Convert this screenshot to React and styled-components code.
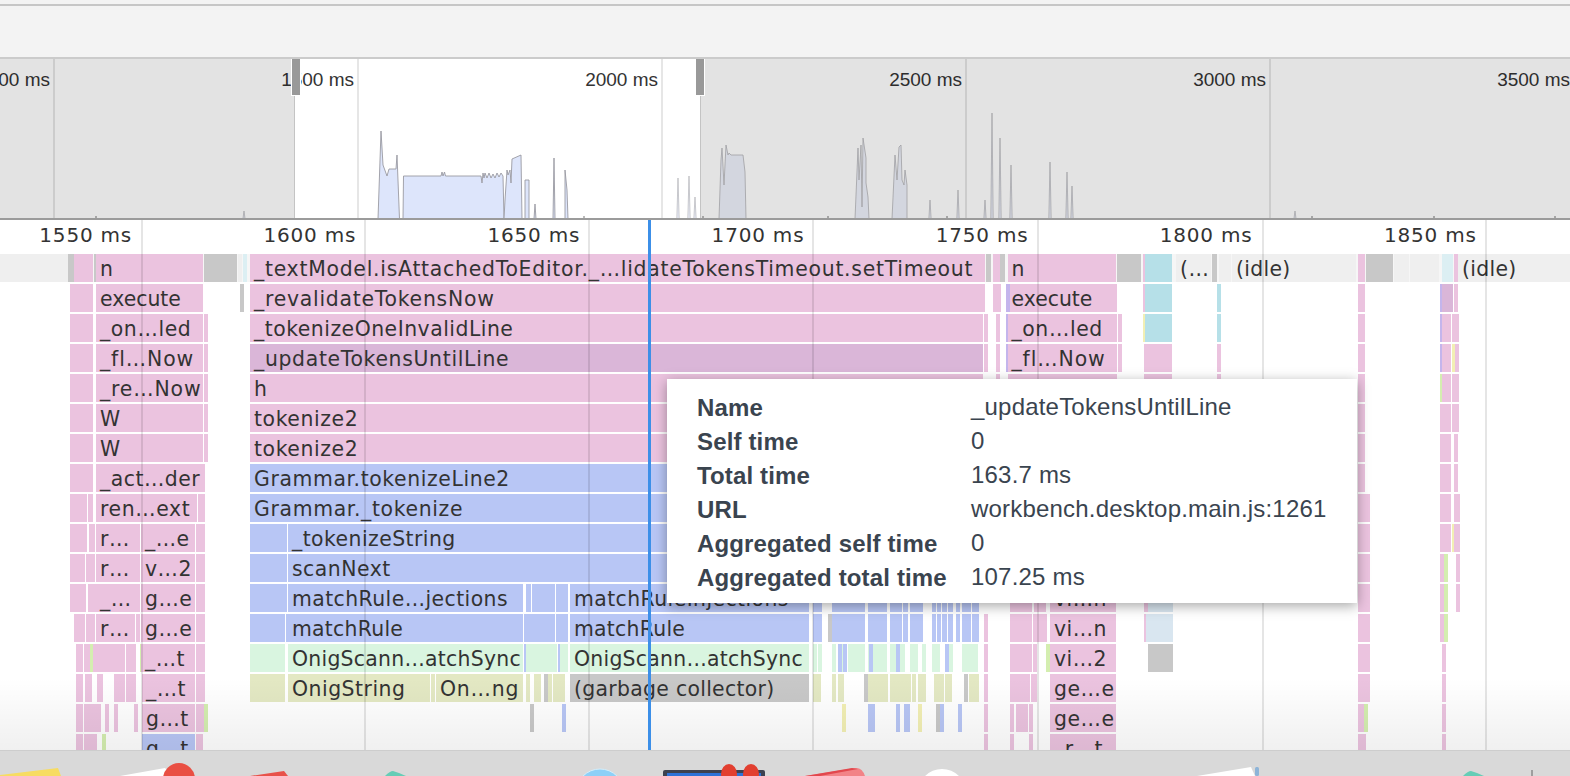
import React from 'react';
import styled, { createGlobalStyle } from 'styled-components';

const GlobalStyle = createGlobalStyle`
  html, body {
    margin: 0;
    padding: 0;
    overflow: hidden;
    background: #fff;
  }
`;

const palette = {
  pink: '#ebc3df',
  hover: '#dab6d8',
  blue: '#b8c6f5',
  green: '#d9f5e0',
  olive: '#e3e8c3',
  gray: '#c8c8c8',
  cyan: '#b6e0e8',
  pale: '#dceff3',
  mist: '#d9e6f0',
  idle: '#efefef',
  lilac: '#c4b5ec',
  lime: '#d4eeb0',
  yellow: '#f2efb4',
};

const Page = styled.div`
  width: 1570px;
  height: 776px;
  display: flex;
  flex-direction: column;
  overflow: hidden;
  font-family: "DejaVu Sans", sans-serif;
`;

const Toolbar = styled.div`
  height: 55px;
  margin-top: 4px;
  flex: none;
  box-sizing: border-box;
  background: #f3f3f3;
  border-top: 2px solid #c6c6c6;
  border-bottom: 2px solid #cbcbcb;
  box-shadow: 0 -4px 0 #f3f3f3;
`;

const Overview = styled.div`
  position: relative;
  height: 161px;
  flex: none;
  box-sizing: border-box;
  background: #fff;
  border-bottom: 2px solid #9b9b9b;
  overflow: hidden;
`;

const OverviewGrid = styled.div`
  position: absolute;
  inset: 0;
  left: -249px;
  display: flex;
`;

const OverviewCell = styled.div`
  width: 304px;
  height: 100%;
  flex: none;
  box-sizing: border-box;
  border-right: 2px solid #e6e6e6;
  padding: 10px 3px 0 0;
  text-align: right;
  font-family: "Liberation Sans", Arial, sans-serif;
  font-size: 19px;
  line-height: 22px;
  color: #333;
`;

const Chart = styled.svg`
  position: absolute;
  left: 0;
  top: 1px;
`;

const Dim = styled.div`
  position: absolute;
  top: 0;
  bottom: 0;
  background: rgba(0, 0, 0, 0.11);
  left: ${p => p.$left}px;
  width: ${p => p.$width}px;
  ${p => (p.$edge === 'right' ? 'border-right: 1px solid #c4c4c4;' : 'border-left: 1px solid #c4c4c4;')}
  box-sizing: border-box;
`;

const Handle = styled.div`
  position: absolute;
  top: 0;
  left: ${p => p.$left}px;
  width: 10px;
  height: 37px;
  box-sizing: border-box;
  background: #999;
  border: 1.5px solid #fff;
  border-top: none;
`;

const Timeline = styled.div`
  position: relative;
  flex: 1;
  min-height: 0;
  display: flex;
  flex-direction: column;
  overflow: hidden;
  background: #fff;
`;

const Ruler = styled.div`
  height: 34px;
  flex: none;
  display: flex;
  margin-left: -83px;
`;

const RulerCell = styled.div`
  width: 224.1px;
  flex: none;
  box-sizing: border-box;
  padding: 2px 9px 0 0;
  text-align: right;
  font-size: 20px;
  line-height: 26px;
  letter-spacing: 0.8px;
  color: #333;
`;

const Flame = styled.div`
  flex: 1;
  min-height: 0;
  display: flex;
  flex-direction: column;
  gap: 2px;
`;

const Row = styled.div`
  position: relative;
  height: 28px;
  flex: none;
  background: ${p => (p.$task ? '#f6f6f6' : 'transparent')};
`;

const Bar = styled.div.attrs(p => ({
  style: { left: p.$x, width: p.$w, letterSpacing: p.$ls },
}))`
  position: absolute;
  top: 0;
  height: 28px;
  box-sizing: border-box;
  padding-left: 4px;
  background: ${p => palette[p.$c]};
  color: #333;
  font-size: 20.4px;
  line-height: 30px;
  letter-spacing: 0.5px;
  white-space: nowrap;
  overflow: hidden;
`;

const GridLine = styled.div`
  position: absolute;
  top: 0;
  bottom: 0;
  left: ${p => p.$left}px;
  width: 2px;
  background: rgba(0, 0, 0, 0.1);
`;

const Fade = styled.div`
  position: absolute;
  left: 0;
  right: 0;
  bottom: 0;
  height: 72px;
  background: linear-gradient(rgba(0, 0, 0, 0), rgba(0, 0, 0, 0.06));
`;

const Cursor = styled.div`
  position: absolute;
  top: 0;
  bottom: 0;
  left: 648px;
  width: 3px;
  background: #3c8fe8;
`;

const Tooltip = styled.div`
  position: absolute;
  left: 667px;
  top: 159px;
  width: 690px;
  height: 224px;
  box-sizing: border-box;
  padding: 11px 0 0 30px;
  background: #fff;
  box-shadow: 0 3px 12px rgba(0, 0, 0, 0.35);
  display: grid;
  grid-template-columns: 274px 1fr;
  grid-auto-rows: 34px;
  font-family: "Liberation Sans", Arial, sans-serif;
  font-size: 24px;
  line-height: 34px;
  color: #3a444f;
`;

const TipName = styled.div`
  font-weight: 700;
  margin-top: 1px;
  letter-spacing: 0.15px;
`;

const TipValue = styled.div`
  letter-spacing: 0.2px;
`;

const Dock = styled.div`
  height: 26px;
  flex: none;
  box-sizing: border-box;
  background: #d9d9d9;
  border-top: 1px solid #cdcdcd;
  overflow: hidden;
`;

const DockIcons = styled.svg`
  display: block;
`;

// one entry per bar: colour, start x, end x, label, letter spacing where the label runs wider or tighter
const B = (c, x, e, t, ls) => ({ c, x, w: e - x, t, ls });
const slivers = (c, ...xs) => xs.map(x => B(c, x, x + 1.2));
const spans = (c, ...pairs) => pairs.map(([x, e]) => B(c, x, e));

const farStripes = slivers('pink', 1358, 1360.5, 1363, 1365.5);
const nearRight = [B('pink', 1441.5, 1451), ...slivers('pink', 1440, 1454, 1456)];

const blueRun = [[813, 814], [815, 817], [818, 821], [832, 834], [835, 837], [838, 840], [841, 843], [845, 847], [848, 865], [868, 869], [871, 872], [873, 887], [890, 893], [894, 897], [898, 902], [903, 908], [910, 923], [932, 935], [937, 941], [942, 947], [948, 953], [956, 960], [962, 971], [972, 979]];
const greenRun = [[813, 817], [818, 821], [832, 835], [839, 843], [848, 865], [868, 869], [873, 887], [890, 896], [898, 905], [910, 918], [922, 923], [932, 940], [945, 953], [962, 978]];
const oliveRun = [[813, 814], [815, 816], [817, 818], [832, 833], [838, 839], [840, 842], [868, 869], [870, 871], [872, 873], [874, 875], [876, 877], [878, 879], [880, 883], [884, 887], [890, 891], [892, 893], [894, 895], [896, 897], [899, 900], [901, 902], [903, 904], [905, 906], [907, 908], [912, 915], [918, 919], [920, 921], [922, 923], [934, 936], [937, 939], [940, 942], [945, 947], [948, 950], [969, 970], [971, 972], [973, 974], [975, 978]];

const leftPink = [B('pink', 70, 71), B('pink', 74, 93)];

const rows = [
  [
    B('idle', 0, 68), B('gray', 68, 70), B('gray', 71, 73), B('pink', 74, 93), B('gray', 94, 95),
    B('pink', 96, 203, 'n'), B('gray', 204, 237), B('idle', 238, 240), B('pale', 243, 245),
    B('pink', 250, 985, '_textModel.isAttachedToEditor._…lidateTokensTimeout.setTimeout', '0.74px'),
    B('gray', 986, 991), B('pink', 993, 995), B('pink', 996, 999), B('gray', 1000, 1005),
    B('pink', 1007.5, 1116, 'n'), B('gray', 1117, 1141), B('pink', 1143, 1145), B('cyan', 1145, 1172),
    B('idle', 1176, 1211, '(…'), B('gray', 1212, 1217), B('idle', 1219, 1231), B('idle', 1232, 1356, '(idle)', '0.3px'),
    B('pink', 1358, 1365), B('gray', 1366, 1393), B('idle', 1394, 1409), B('idle', 1410, 1439),
    B('pale', 1441.5, 1453), B('pink', 1454, 1455.5), B('idle', 1458, 1570, '(idle)', '0.3px'),
  ],
  [
    ...leftPink, B('pink', 96, 203, 'execute', '0'), B('gray', 240, 243),
    B('pink', 250, 985, '_revalidateTokensNow', '0.75px'), ...slivers('pink', 993, 997),
    B('pink', 1007.5, 1117, 'execute', '0'), B('lilac', 1006, 1007), B('pink', 1143, 1145), B('cyan', 1145, 1172), B('cyan', 1217, 1218.5),
    B('pink', 1358, 1365), B('lilac', 1440, 1441), B('hover', 1442, 1453), B('pink', 1454, 1455.5),
  ],
  [
    ...leftPink, B('pink', 96, 203, '_on…led', '0.6px'), B('pink', 204, 205.5),
    B('pink', 250, 983, '_tokenizeOneInvalidLine'), B('pink', 984, 985), B('pink', 996, 998),
    B('lilac', 1006, 1007), B('pink', 1007.5, 1117, '_on…led', '0.6px'), B('pink', 1118, 1119), B('yellow', 1143, 1144), B('cyan', 1145, 1172), B('cyan', 1217, 1218.5),
    B('pink', 1358, 1365), B('lilac', 1440, 1441), B('pink', 1442, 1451), ...slivers('pink', 1452, 1454.5),
  ],
  [
    ...leftPink, B('pink', 96, 203, '_fl…Now', '0.9px'), B('pink', 204, 205.5),
    B('hover', 250, 983, '_updateTokensUntilLine', '0.68px'), B('pink', 984, 985), B('pink', 996, 998),
    B('lilac', 1006, 1007), B('pink', 1007.5, 1117, '_fl…Now', '0.9px'), B('pink', 1118, 1119), B('pink', 1144, 1172), B('pink', 1217, 1218.5),
    B('pink', 1358, 1365), B('lilac', 1440, 1441), B('pink', 1442, 1451), B('yellow', 1452, 1453.5), B('pink', 1454.5, 1456),
  ],
  [
    ...leftPink, B('pink', 96, 203, '_re…Now', '0.85px'), B('pink', 204, 205.5),
    B('pink', 250, 983, 'h'), B('pink', 996, 998), B('pink', 1007.5, 1117), B('pink', 1144, 1172), B('pink', 1217, 1218.5),
    B('pink', 1358, 1365), B('lime', 1440, 1441), B('pink', 1442, 1451), ...slivers('pink', 1452, 1454.5),
  ],
  [
    ...leftPink, B('pink', 96, 203, 'W'), B('pink', 204, 205.5),
    B('pink', 250, 985, 'tokenize2', '0.6px'), B('pink', 1358, 1365), B('pink', 1442, 1451), ...slivers('pink', 1440, 1452, 1454.5),
  ],
  [
    ...leftPink, B('pink', 96, 203, 'W'), B('pink', 204, 205.5),
    B('pink', 250, 985, 'tokenize2', '0.6px'), B('pink', 1358, 1365), B('pink', 1442, 1451), ...slivers('pink', 1440, 1454),
  ],
  [
    ...leftPink, B('pink', 96, 205, '_act…der'),
    B('blue', 250, 985, 'Grammar.tokenizeLine2', '0.6px'), B('pink', 1358, 1365), B('pink', 1442, 1451), ...slivers('pink', 1440, 1454),
  ],
  [
    B('pink', 70, 71), B('pink', 74, 87), B('pink', 88, 93), B('pink', 96, 197, 'ren…ext', '0.6px'), ...slivers('pink', 198, 201),
    B('blue', 250, 985, 'Grammar._tokenize', '0.65px'), ...farStripes, ...nearRight,
  ],
  [
    ...slivers('pink', 70, 89, 91), B('pink', 74, 87), B('pink', 96, 140, 'r…'), B('pink', 141, 195, '_…e'), ...slivers('pink', 196, 198.5, 201),
    B('blue', 250, 287), B('blue', 288, 985, '_tokenizeString', '0.45px'), ...farStripes, B('pink', 1441.5, 1451), B('yellow', 1452, 1453.5), ...slivers('pink', 1440, 1454, 1456),
  ],
  [
    ...slivers('pink', 70, 86, 89, 91), B('pink', 74, 85), B('pink', 96, 140, 'r…'), B('pink', 141, 195, 'v…2'), ...slivers('pink', 196, 198.5, 201),
    B('blue', 250, 287), B('blue', 288, 985, 'scanNext'), ...farStripes, ...slivers('pink', 1440, 1456), B('lime', 1444, 1445.5),
  ],
  [
    ...slivers('pink', 70, 87.5, 90, 92), B('pink', 74, 86), B('pink', 96, 140, '_…'), B('pink', 141, 195, 'g…e'), ...slivers('pink', 196, 198.5, 201),
    B('blue', 250, 287), B('blue', 288, 523, 'matchRule…jections', '0.42px'), ...spans('blue', [526, 531], [532, 555], [556, 557], [558, 559], [560, 562], [563.5, 566.5]),
    B('blue', 570, 809, 'matchRuleInjections', '0.42px'), ...spans('blue', ...blueRun), B('pink', 1010, 1032), B('pink', 1034, 1046), B('pink', 1050, 1116, 'vi…n'), B('mist', 1146, 1173), ...slivers('pink', 1144), ...farStripes, ...slivers('pink', 1440, 1456), B('lime', 1444, 1445.5),
  ],
  [
    B('pink', 74, 75), B('pink', 76, 85), ...slivers('pink', 86, 88, 90.5), B('pink', 91, 93), B('pink', 96, 135, 'r…'), B('pink', 136, 140), B('pink', 141, 195, 'g…e'), ...slivers('pink', 196, 198.5, 201),
    B('blue', 250, 285), B('blue', 286, 287), B('blue', 288, 523, 'matchRule', '0.25px'), ...spans('blue', [524, 525], [526, 527], [528, 529], [530, 531], [532, 555], [556, 557], [558, 559], [560, 562], [563.5, 566.5]),
    B('blue', 570, 809, 'matchRule', '0.25px'), ...spans('blue', ...blueRun), B('gray', 828, 831), B('pink', 984, 985.5),
    B('pink', 1010, 1032), B('pink', 1033, 1034), B('pink', 1034.5, 1047), B('pink', 1050, 1116, 'vi…n'), B('pink', 1144, 1145), B('mist', 1146, 1173), ...farStripes, B('pink', 1440, 1441.5), B('lime', 1444, 1445.5),
  ],
  [
    B('pink', 76, 83), ...slivers('pink', 84, 87), B('lime', 90, 91), B('pink', 92.5, 94), B('pink', 97, 125), B('pink', 126, 136), B('lime', 140, 141), B('pink', 141, 195, '_…t'), ...slivers('pink', 196, 198.5, 201),
    B('green', 250, 285), B('green', 288, 523, 'OnigScann…atchSync', '0.26px'), B('blue', 524, 525), ...spans('green', [526, 527], [528, 529], [530, 533]), B('green', 533, 557), B('blue', 557.5, 559), B('green', 560, 568),
    B('green', 570, 809, 'OnigScann…atchSync', '0.26px'), ...spans('green', ...greenRun), ...slivers('blue', 838, 843, 869, 896, 945), B('pink', 984, 985.5),
    B('pink', 1010, 1032), B('pink', 1033, 1034), B('lime', 1046, 1047), B('pink', 1050, 1116, 'vi…2'), B('gray', 1148, 1173), ...farStripes, B('pink', 1442, 1443.5),
  ],
  [
    B('pink', 76, 83), B('pink', 85, 86), B('pink', 88, 91.5), B('pink', 97, 103), B('pink', 114, 125), B('pink', 126, 136), B('pink', 142, 195, '_…t'), ...slivers('pink', 196, 198.5, 201),
    B('olive', 250, 285), B('olive', 288, 430, 'OnigString'), B('olive', 431, 433), B('olive', 436, 523, 'On…ng', '0.8px'), ...spans('olive', [526, 530], [534, 541], [546, 552], [553, 555], [556, 557], [558, 560], [561, 563]), B('gray', 544, 545.5),
    B('gray', 570, 809, '(garbage collector)', '0.3px'), ...spans('olive', ...oliveRun), B('gray', 864, 865), B('gray', 964, 967), B('pink', 984, 985.5),
    B('pink', 1010, 1030), B('pink', 1031, 1032), B('pink', 1032.5, 1034), B('pink', 1050, 1116, 'ge…e'), ...farStripes, B('pink', 1442, 1443.5),
  ],
  [
    B('pink', 76, 83), ...slivers('pink', 84, 87, 90.5), B('pink', 95, 101), ...slivers('pink', 104.5, 114, 134), B('pink', 142, 195, 'g…t'), ...slivers('pink', 196, 198.5, 200.5), B('lime', 204, 205),
    B('gray', 530, 531), B('blue', 562, 563), B('yellow', 842, 843), ...slivers('blue', 868, 870.5, 896, 904, 906, 958), B('yellow', 918, 919), B('gray', 936, 939.5), B('blue', 940, 941), B('pink', 984, 985.5),
    B('pink', 1010, 1011), B('pink', 1016, 1028), B('pink', 1029, 1030.5), B('pink', 1050, 1116, 'ge…e'), ...slivers('pink', 1358, 1361), B('lime', 1364, 1365.5), B('pink', 1442, 1443.5),
  ],
  [
    B('pink', 76, 83), ...slivers('pink', 84, 87, 90, 93), B('lime', 102, 104), B('blue', 142, 195, 'g…t'), ...slivers('pink', 196, 198.5),
    ...slivers('pink', 984, 1010, 1029), B('pink', 1050, 1116, '_r…t'), ...slivers('pink', 1358, 1362, 1442),
  ],
];

const overviewLabels = ['1000 ms', '1500 ms', '2000 ms', '2500 ms', '3000 ms', '3500 ms'];
const rulerLabels = ['1550 ms', '1600 ms', '1650 ms', '1700 ms', '1750 ms', '1800 ms', '1850 ms'];
const gridLines = [141, 364, 588, 812, 1037, 1262, 1485];

const tip = [
  ['Name', '_updateTokensUntilLine'],
  ['Self time', '0'],
  ['Total time', '163.7 ms'],
  ['URL', 'workbench.desktop.main.js:1261'],
  ['Aggregated self time', '0'],
  ['Aggregated total time', '107.25 ms'],
];

const selectedAreas = [
  '378,159 381,71 383,105 387,116 389,109 396,109 397,95 399.5,159',
  '403,159 403.5,116 441,116 442,112 443,116 444.5,112 445.5,116 481,116 482,123 483,113 484,118 485,113 487,118 489,113 491,118 493,114 495,118 497,113 499,117 501,113 503,116 504,159',
  '504,159 505,140 507,110 508,115 510,110 511,123 512,99 521,95 522,159',
  '525,159 525,120 529,120 529,159',
  '534,159 535,144 536,159',
  '553,159 554,98 555,159',
  '565,159 565,110 567,130 568,159',
];

const dimmedAreas = [
  '719,159 721,100 722,88 724,125 726,85 728,95 729,93 731,95 743,95 745,112 746,159',
  '855,159 858,88 859,120 861,85 862,147 863,78 866,98 866,123 868,137 869,159',
  '892,159 895,95 897,120 899,87 901,85 902,120 904,125 905,110 907,125 907,159',
];

const spikes = [[244, 151], [678, 118], [689, 116], [695, 137], [930, 140], [958, 130], [985, 140], [992, 53], [1000, 78], [1011, 105], [1050, 102], [1067, 112], [1072, 126], [1295, 151]];
const baseTicks = [96, 584, 703, 828, 947, 1312, 1434, 1555];

const OverviewChart = () => (
  <Chart width="1570" height="160" viewBox="0 0 1570 160">
    {selectedAreas.map(points => (
      <polygon key={points} points={points} fill="#dde5fb" stroke="#9a9aa2" strokeWidth="0.9" />
    ))}
    {dimmedAreas.map(points => (
      <polygon key={points} points={points} fill="#eef1fb" stroke="#b4b4b8" strokeWidth="0.8" />
    ))}
    {spikes.map(([x, y]) => (
      <polygon key={x} points={`${x - 1.2},160 ${x},${y} ${x + 1.2},160`} fill="#eef1fb" stroke="#a8a8ac" strokeWidth="0.6" />
    ))}
    {baseTicks.map(x => (
      <line key={x} x1={x} x2={x} y1="156" y2="159" stroke="#777" strokeWidth="1" />
    ))}
  </Chart>
);

const DockArt = () => (
  <DockIcons width="1570" height="25" viewBox="0 0 1570 25">
    <polygon points="0,25 0,24 58,17 61,25" fill="#f7dc62" />
    <polygon points="120,25 165,17 172,25" fill="#fff" />
    <circle cx="179" cy="28" r="16" fill="#e94f43" />
    <polygon points="250,25 284,20 288,25" fill="#e8524a" />
    <path d="M385 25 Q390 20 393 20 Q400 22 406 25 Z" fill="#66cdb6" />
    <circle cx="600" cy="42" r="24" fill="#8ed0f7" stroke="#d4eefb" strokeWidth="1" />
    <rect x="663" y="19" width="102" height="12" rx="2" fill="#3d4250" />
    <rect x="667" y="22" width="94" height="8" fill="#2d72d8" />
    <ellipse cx="729" cy="23" rx="8" ry="10" fill="#e23f30" />
    <ellipse cx="751" cy="23" rx="8" ry="10" fill="#e23f30" />
    <path d="M805 25 L855 17 Q862 16 865 25 Z" fill="#f28387" />
    <path d="M805 25 L852 17 L858 18 L820 25 Z" fill="#e2484e" />
    <circle cx="942" cy="42" r="24" fill="#fff" />
    <polygon points="1197,25 1251,16 1255,25" fill="#fff" />
    <rect x="1255" y="16" width="4" height="9" rx="1.5" fill="#8db4d8" />
    <path d="M1463 25 Q1468 20 1471 20 Q1478 22 1484 25 Z" fill="#66cdb6" />
    <line x1="1532" x2="1532" y1="19" y2="25" stroke="#8a8a8a" strokeWidth="1.5" />
  </DockIcons>
);

export default function App() {
  return (
    <Page>
      <GlobalStyle />
      <Toolbar />
      <Overview>
        <OverviewGrid>
          {overviewLabels.map(label => (
            <OverviewCell key={label}>{label}</OverviewCell>
          ))}
        </OverviewGrid>
        <OverviewChart />
        <Dim $left={0} $width={295} $edge="right" />
        <Dim $left={700} $width={870} $edge="left" />
        <Handle $left={291} />
        <Handle $left={695} />
      </Overview>
      <Timeline>
        <Ruler>
          {rulerLabels.map(label => (
            <RulerCell key={label}>{label}</RulerCell>
          ))}
        </Ruler>
        <Flame>
          {rows.map((bars, i) => (
            <Row key={i} $task={i === 0}>
              {bars.map((bar, j) => (
                <Bar key={j} $c={bar.c} $x={bar.x} $w={bar.w} $ls={bar.ls}>
                  {bar.t}
                </Bar>
              ))}
            </Row>
          ))}
        </Flame>
        {gridLines.map(x => (
          <GridLine key={x} $left={x} />
        ))}
        <Fade />
        <Cursor />
        <Tooltip>
          {tip.map(([name, value]) => (
            <React.Fragment key={name}>
              <TipName>{name}</TipName>
              <TipValue>{value}</TipValue>
            </React.Fragment>
          ))}
        </Tooltip>
      </Timeline>
      <Dock>
        <DockArt />
      </Dock>
    </Page>
  );
}
